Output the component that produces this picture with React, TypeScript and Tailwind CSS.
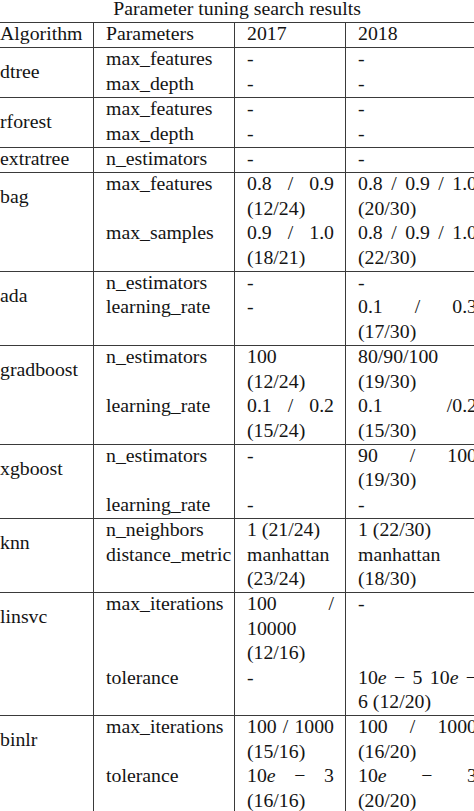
import type { ReactNode } from 'react';

type ParamRow = {
  name: string;
  v2017: ReactNode;
  v2018: ReactNode;
};

type Group = {
  algorithm: string;
  rows: ParamRow[];
};

const Ee = () => <i>e</i>;

const groups: Group[] = [
  {
    algorithm: 'dtree',
    rows: [
      { name: 'max_features', v2017: '-', v2018: '-' },
      { name: 'max_depth', v2017: '-', v2018: '-' },
    ],
  },
  {
    algorithm: 'rforest',
    rows: [
      { name: 'max_features', v2017: '-', v2018: '-' },
      { name: 'max_depth', v2017: '-', v2018: '-' },
    ],
  },
  {
    algorithm: 'extratree',
    rows: [{ name: 'n_estimators', v2017: '-', v2018: '-' }],
  },
  {
    algorithm: 'bag',
    rows: [
      { name: 'max_features', v2017: '0.8 / 0.9 (12/24)', v2018: '0.8 / 0.9 / 1.0 (20/30)' },
      { name: 'max_samples', v2017: '0.9 / 1.0 (18/21)', v2018: '0.8 / 0.9 / 1.0 (22/30)' },
    ],
  },
  {
    algorithm: 'ada',
    rows: [
      { name: 'n_estimators', v2017: '-', v2018: '-' },
      { name: 'learning_rate', v2017: '-', v2018: '0.1 / 0.3 (17/30)' },
    ],
  },
  {
    algorithm: 'gradboost',
    rows: [
      { name: 'n_estimators', v2017: '100 (12/24)', v2018: '80/90/100 (19/30)' },
      { name: 'learning_rate', v2017: '0.1 / 0.2 (15/24)', v2018: '0.1 /0.2 (15/30)' },
    ],
  },
  {
    algorithm: 'xgboost',
    rows: [
      { name: 'n_estimators', v2017: '-', v2018: '90 / 100 (19/30)' },
      { name: 'learning_rate', v2017: '-', v2018: '-' },
    ],
  },
  {
    algorithm: 'knn',
    rows: [
      { name: 'n_neighbors', v2017: '1 (21/24)', v2018: '1 (22/30)' },
      { name: 'distance_metric', v2017: 'manhattan (23/24)', v2018: 'manhattan (18/30)' },
    ],
  },
  {
    algorithm: 'linsvc',
    rows: [
      { name: 'max_iterations', v2017: '100 / 10000 (12/16)', v2018: '-' },
      {
        name: 'tolerance',
        v2017: '-',
        v2018: (
          <>
            10<Ee /> − 5 10<Ee /> − 6 (12/20)
          </>
        ),
      },
    ],
  },
  {
    algorithm: 'binlr',
    rows: [
      { name: 'max_iterations', v2017: '100 / 1000 (15/16)', v2018: '100 / 1000 (16/20)' },
      {
        name: 'tolerance',
        v2017: (
          <>
            10<Ee /> − 3 (16/16)
          </>
        ),
        v2018: (
          <>
            10<Ee /> − 3 (20/20)
          </>
        ),
      },
    ],
  },
];

// pulls the text up a little so baselines sit like the LaTeX struts
function Lines({ children }: { children: ReactNode }) {
  return <div className="-mt-[2px] pb-[2px]">{children}</div>;
}

function AlgorithmCell({ name, multirow }: { name: string; multirow: boolean }) {
  return (
    <div className="w-[94px] shrink-0 border-r border-[#3a3a3a]">
      {multirow ? (
        <div className="flex h-[48.8px] items-center">
          <div className="-mt-[3px]">{name}</div>
        </div>
      ) : (
        <Lines>{name}</Lines>
      )}
    </div>
  );
}

function ParamCells({ row }: { row: ParamRow }) {
  return (
    <>
      <div className="border-r border-[#3a3a3a] pl-[12px] pr-[2px] whitespace-nowrap">
        <Lines>{row.name}</Lines>
      </div>
      <div className="border-r border-[#3a3a3a] pl-[12px] pr-[11px] text-justify">
        <Lines>{row.v2017}</Lines>
      </div>
      <div className="pl-[12px] pr-[8px] text-justify">
        <Lines>{row.v2018}</Lines>
      </div>
    </>
  );
}

export default function App() {
  return (
    <div
      className="w-[474px] h-[811px] overflow-hidden bg-white text-[19.8px] leading-[24.4px] text-[#141414]"
      style={{ fontFamily: '"Liberation Serif", "Times New Roman", serif' }}
    >
      <div className="h-[22px] pt-[1px] text-center leading-[14px]">Parameter tuning search results</div>

      <div className="border-t border-[#3a3a3a]">
        <div className="flex border-b border-[#3a3a3a]">
          <AlgorithmCell name="Algorithm" multirow={false} />
          <div className="grid shrink-0 grid-cols-[141px_111px_139px]">
            <ParamCells row={{ name: 'Parameters', v2017: '2017', v2018: '2018' }} />
          </div>
        </div>

        {groups.map((group) => (
          <div key={group.algorithm} className="flex border-b border-[#3a3a3a]">
            <AlgorithmCell name={group.algorithm} multirow={group.rows.length > 1} />
            <div className="grid shrink-0 grid-cols-[141px_111px_139px]">
              {group.rows.map((row) => (
                <ParamCells key={row.name} row={row} />
              ))}
            </div>
          </div>
        ))}
      </div>
    </div>
  );
}
